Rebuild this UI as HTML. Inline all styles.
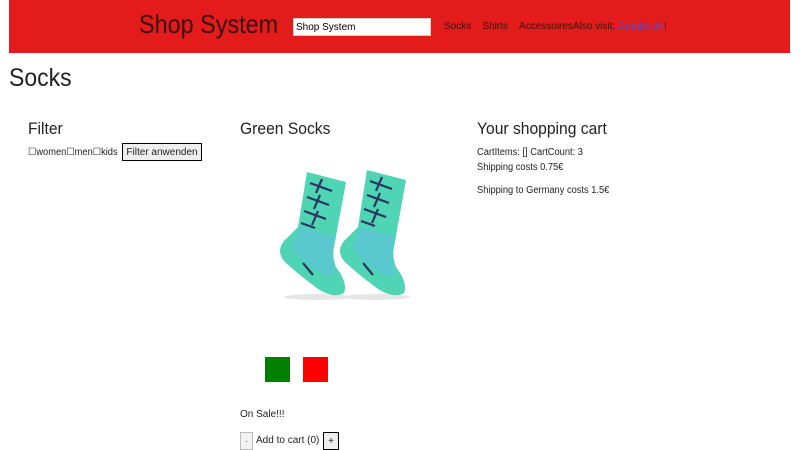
<!DOCTYPE html>
<html><head><meta charset="utf-8"><style>
body{margin:0;width:800px;height:450px;overflow:hidden;background:#fff;font-family:"Liberation Sans",sans-serif;color:#222;position:relative}
.a{position:absolute;white-space:nowrap}
</style></head><body>
<div class="a" style="left:9px;top:0;width:781px;height:53px;background:#e31b1b"></div>
<div class="a" style="left:139px;top:9px;font-size:26px;color:#3a1010;transform:scaleX(0.9);transform-origin:left">Shop System</div>
<div class="a" style="left:293px;top:18px;width:138px;height:18px;background:#fff;border:1px solid #ccc;font-size:10px;line-height:17px;padding-left:2px;box-sizing:border-box;color:#000">Shop System</div>
<div class="a" style="left:444px;top:21px;font-size:10px;color:#3a1010">Socks&nbsp;&nbsp;&nbsp;&nbsp;Shirts&nbsp;&nbsp;&nbsp;&nbsp;AccessoiresAlso visit: <span style="color:#5b4cc0">Google.de</span>!</div>
<div class="a" style="left:9px;top:64px;font-size:25px;transform:scaleX(0.92);transform-origin:left">Socks</div>
<div class="a" style="left:28px;top:119px;font-size:17px;transform:scaleX(0.92);transform-origin:left">Filter</div>
<div class="a" style="left:28px;top:147px;font-size:10px;transform:scaleX(0.93);transform-origin:left">☐women☐men☐kids</div>
<div class="a" style="left:122px;top:143px;width:80px;height:18px;border:1px solid #000;background:#eee;font-size:10px;line-height:17px;text-align:center;box-sizing:border-box">Filter anwenden</div>
<div class="a" style="left:240px;top:119px;font-size:17px;transform:scaleX(0.92);transform-origin:left">Green Socks</div>
<div class="a" style="left:477px;top:119px;font-size:17px;transform:scaleX(0.92);transform-origin:left">Your shopping cart</div>
<div class="a" style="left:477px;top:145px;font-size:10px;line-height:15px;transform:scaleX(0.93);transform-origin:left">CartItems: [] CartCount: 3<br>Shipping costs 0.75€</div>
<div class="a" style="left:477px;top:185px;font-size:10px;transform:scaleX(0.93);transform-origin:left">Shipping to Germany costs 1.5€</div>
<svg class="a" style="left:270px;top:165px" width="150" height="140">
<ellipse cx="48" cy="132" rx="34" ry="3" fill="#e6e6e6"/>
<ellipse cx="106" cy="132" rx="34" ry="3" fill="#e6e6e6"/>
<path d="M37 7 L76 17 L64 82 Q62 92 66 102 Q78 118 74 128 Q64 134 48 124 Q24 106 14 96 Q6 86 14 76 L28 62 Z" fill="#4fd4b4"/>
<path d="M97 5 L136 15 L124 82 Q122 92 126 102 Q138 118 134 128 Q124 134 108 124 Q84 106 74 96 Q66 86 74 76 L88 62 Z" fill="#4fd4b4"/>
<path d="M30 62 L66 72 L63 86 Q62 100 66 108 L58 112 Q30 96 22 82 Z" fill="#5cc6d6" opacity=".75"/>
<path d="M90 62 L126 72 L123 86 Q122 100 126 108 L118 112 Q90 96 82 82 Z" fill="#5cc6d6" opacity=".75"/>
<g stroke="#2a3560" stroke-width="2.2" fill="none"><path d="M40 18l22 8M37 32l22 8M34 46l22 8M31 58l14 5M52 14l-6 14M50 30l-6 14M48 46l-6 14"/><path d="M100 16l22 8M97 30l22 8M94 44l22 8M91 56l14 5M112 12l-6 14M110 28l-6 14M108 44l-6 14"/><path d="M33 98l10 12M93 98l10 12"/></g>
</svg>
<div class="a" style="left:265px;top:357px;width:25px;height:25px;background:#008000"></div>
<div class="a" style="left:303px;top:357px;width:25px;height:25px;background:#f00"></div>
<div class="a" style="left:240px;top:409px;font-size:10px">On Sale!!!</div>
<div class="a" style="left:240px;top:432px;width:13px;height:18px;border:1px solid #bbb;background:#f2f2f2;font-size:9px;text-align:center;line-height:17px;box-sizing:border-box;color:#888">-</div>
<div class="a" style="left:256px;top:435px;font-size:10px">Add to cart (0)</div>
<div class="a" style="left:323px;top:432px;width:16px;height:18px;border:1px solid #000;background:#eee;font-size:10px;text-align:center;line-height:17px;box-sizing:border-box">+</div>
</body></html>
